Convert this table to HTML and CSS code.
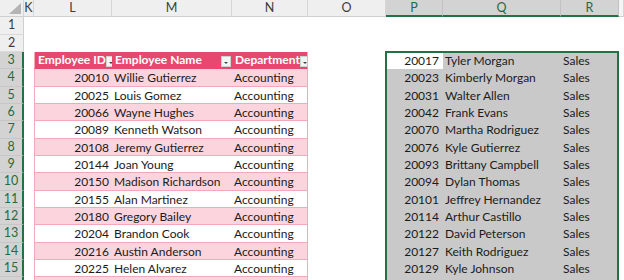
FILE: index.html
```html
<!DOCTYPE html>
<html>
<head>
<meta charset="utf-8">
<link rel="stylesheet" href="styles.css">
</head>
<body>
<div class="sheet">
  <div class="ch corner"><svg class="tri" width="12" height="11" viewBox="0 0 12 11"><polygon points="12,0 12,11 0,11" fill="#b4b4b4"/></svg></div>
  <div class="ch">K</div><div class="ch">L</div><div class="ch">M</div><div class="ch">N</div><div class="ch">O</div>
  <div class="ch sel">P</div><div class="ch sel">Q</div><div class="ch sel">R</div><div class="ch last"></div>

  <div class="rh">1</div><div></div><div></div><div></div><div></div><div></div><div></div><div></div><div></div><div></div>
  <div class="rh">2</div><div></div><div></div><div></div><div></div><div></div><div></div><div></div><div></div><div></div>

  <div class="rh sel">3</div><div></div>
  <div class="th first">Employee ID<span class="fb"></span></div>
  <div class="th">Employee Name<span class="fb"></span></div>
  <div class="th lastc">Department<span class="fb"></span></div>
  <div></div>
  <div class="s num active">20017</div><div class="s">Tyler Morgan</div><div class="s">Sales</div><div></div>

  <div class="rh sel">4</div><div></div>
  <div class="td band first num">20010</div><div class="td band">Willie Gutierrez</div><div class="td band lastc">Accounting</div><div></div>
  <div class="s num">20023</div><div class="s">Kimberly Morgan</div><div class="s">Sales</div><div></div>

  <div class="rh sel">5</div><div></div>
  <div class="td first num">20025</div><div class="td">Louis Gomez</div><div class="td lastc">Accounting</div><div></div>
  <div class="s num">20031</div><div class="s">Walter Allen</div><div class="s">Sales</div><div></div>

  <div class="rh sel">6</div><div></div>
  <div class="td band first num">20066</div><div class="td band">Wayne Hughes</div><div class="td band lastc">Accounting</div><div></div>
  <div class="s num">20042</div><div class="s">Frank Evans</div><div class="s">Sales</div><div></div>

  <div class="rh sel">7</div><div></div>
  <div class="td first num">20089</div><div class="td">Kenneth Watson</div><div class="td lastc">Accounting</div><div></div>
  <div class="s num">20070</div><div class="s">Martha Rodriguez</div><div class="s">Sales</div><div></div>

  <div class="rh sel">8</div><div></div>
  <div class="td band first num">20108</div><div class="td band">Jeremy Gutierrez</div><div class="td band lastc">Accounting</div><div></div>
  <div class="s num">20076</div><div class="s">Kyle Gutierrez</div><div class="s">Sales</div><div></div>

  <div class="rh sel">9</div><div></div>
  <div class="td first num">20144</div><div class="td">Joan Young</div><div class="td lastc">Accounting</div><div></div>
  <div class="s num">20093</div><div class="s">Brittany Campbell</div><div class="s">Sales</div><div></div>

  <div class="rh sel">10</div><div></div>
  <div class="td band first num">20150</div><div class="td band">Madison Richardson</div><div class="td band lastc">Accounting</div><div></div>
  <div class="s num">20094</div><div class="s">Dylan Thomas</div><div class="s">Sales</div><div></div>

  <div class="rh sel">11</div><div></div>
  <div class="td first num">20155</div><div class="td">Alan Martinez</div><div class="td lastc">Accounting</div><div></div>
  <div class="s num">20101</div><div class="s">Jeffrey Hernandez</div><div class="s">Sales</div><div></div>

  <div class="rh sel">12</div><div></div>
  <div class="td band first num">20180</div><div class="td band">Gregory Bailey</div><div class="td band lastc">Accounting</div><div></div>
  <div class="s num">20114</div><div class="s">Arthur Castillo</div><div class="s">Sales</div><div></div>

  <div class="rh sel">13</div><div></div>
  <div class="td first num">20204</div><div class="td">Brandon Cook</div><div class="td lastc">Accounting</div><div></div>
  <div class="s num">20122</div><div class="s">David Peterson</div><div class="s">Sales</div><div></div>

  <div class="rh sel">14</div><div></div>
  <div class="td band first num">20216</div><div class="td band">Austin Anderson</div><div class="td band lastc">Accounting</div><div></div>
  <div class="s num">20127</div><div class="s">Keith Rodriguez</div><div class="s">Sales</div><div></div>

  <div class="rh sel">15</div><div></div>
  <div class="td first num">20225</div><div class="td">Helen Alvarez</div><div class="td lastc">Accounting</div><div></div>
  <div class="s num">20129</div><div class="s">Kyle Johnson</div><div class="s">Sales</div><div></div>

  <div class="rh sel"></div><div></div>
  <div class="td band first num"></div><div class="td band"></div><div class="td band lastc"></div><div></div>
  <div class="s num"></div><div class="s"></div><div class="s"></div><div></div>

  <div class="selbox"></div>
</div>
</body>
</html>
```

FILE: styles.css
```css
html, body {
  margin: 0;
  padding: 0;
  background: #ffffff;
}

body {
  font-family: Lato, "Noto Sans", sans-serif;
  font-size: 12px;
  color: #1b1b1b;
  overflow: hidden;
}

.sheet {
  position: relative;
  display: grid;
  grid-template-columns: 24px 10px 78px 120px 76px 78px 57px 118px 58px 5px;
  grid-auto-rows: 17.333px;
  width: 624px;
}

.sheet > div {
  box-sizing: border-box;
  white-space: nowrap;
  overflow: hidden;
  line-height: 16px;
}

.ch {
  background: #efefef;
  border-right: 1px solid #d6d6d6;
  border-bottom: 1px solid #cfcfcf;
  text-align: center;
  color: #3c3c3c;
  font-size: 12.5px;
}

.ch.sel {
  background: #d3d3d3;
  color: #1e6d41;
  border-right-color: #c2c2c2;
  border-bottom: 2px solid #217346;
}

.ch.last {
  background: #f4f4f4;
}

.corner {
  position: relative;
}

.tri {
  position: absolute;
  right: 2px;
  bottom: 2px;
}

.rh {
  background: #efefef;
  border-right: 1px solid #cfcfcf;
  border-bottom: 1px solid #dadada;
  text-align: center;
  color: #3c3c3c;
  font-size: 12.5px;
}

.rh.sel {
  background: #d3d3d3;
  color: #1e6d41;
  border-bottom-color: #c6c6c6;
  border-right: 2px solid #217346;
}

.th {
  display: flex;
  align-items: center;
  background: #e8476f;
  color: #ffffff;
  font-weight: 700;
  padding-left: 3px;
  padding-right: 1px;
  border-bottom: 1px solid #e8476f;
}

.th.first {
  padding-left: 3px;
}

.fb {
  margin-left: auto;
  flex: none;
  width: 8px;
  height: 9px;
  margin-top: 3px;
  background: #f4f4f4;
  border: 1px solid #d0d0d0;
  position: relative;
}

.fb::after {
  content: "";
  position: absolute;
  left: 2px;
  top: 5px;
  border-left: 2px solid transparent;
  border-right: 2px solid transparent;
  border-top: 2px solid #444;
}

.td {
  background: #ffffff;
  border-bottom: 1px solid #f2a9ba;
  padding-left: 2px;
  padding-top: 1px;
}

.td.band {
  background: #fbd4dd;
}

.first {
  border-left: 1px solid #f2a9ba;
}

.lastc {
  border-right: 1px solid #f2a9ba;
}

.num {
  text-align: right;
  padding-left: 0;
  padding-right: 3px;
}

.s {
  background: #c9c9c9;
  padding-left: 2px;
  padding-top: 1px;
}

.s.num {
  padding-right: 4px;
}

.s.active {
  background: #ffffff;
}

.sheet > .selbox {
  position: absolute;
  left: 385px;
  top: 51px;
  width: 234px;
  height: 240px;
  border: 2px solid #217346;
  pointer-events: none;
}
```
